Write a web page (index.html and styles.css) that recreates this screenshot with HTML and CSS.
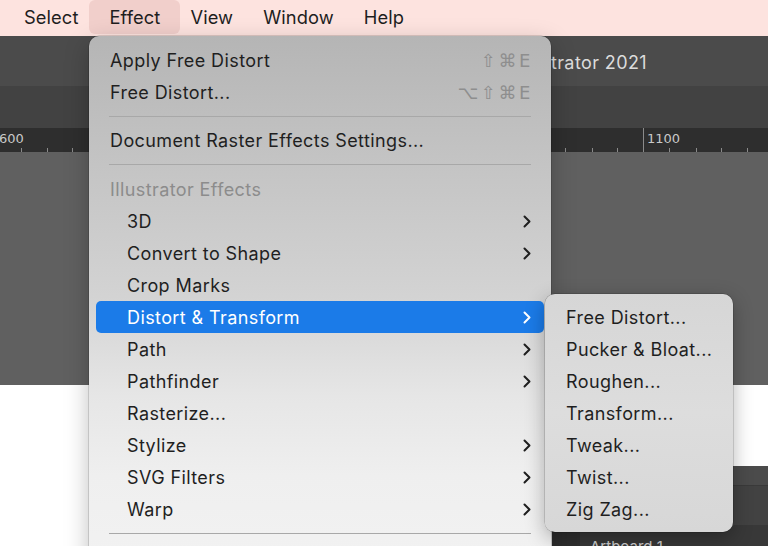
FILE: index.html
```html
<!DOCTYPE html>
<html>
<head>
<meta charset="utf-8">
<link rel="stylesheet" href="styles.css">
</head>
<body>
<div class="screen">
  <div class="menubar">
    <span class="mb-item">Select</span>
    <span class="mb-item active">Effect</span>
    <span class="mb-item">View</span>
    <span class="mb-item">Window</span>
    <span class="mb-item">Help</span>
  </div>
  <div class="app">
    <div class="titlebar"><span class="title">Adobe Illustrator 2021</span></div>
    <div class="toolband"></div>
    <div class="ruler">
      <svg class="ruler-ticks" width="768" height="24" viewBox="0 0 768 24">
        <g stroke="#8a8a8a" stroke-width="1">
          <line x1="21.5" y1="20" x2="21.5" y2="24"/>
          <line x1="47.5" y1="20" x2="47.5" y2="24"/>
          <line x1="72.5" y1="20" x2="72.5" y2="24"/>
          <line x1="565.5" y1="20" x2="565.5" y2="24"/>
          <line x1="592.5" y1="20" x2="592.5" y2="24"/>
          <line x1="617.5" y1="20" x2="617.5" y2="24"/>
          <line x1="643.5" y1="0" x2="643.5" y2="24"/>
          <line x1="669.5" y1="20" x2="669.5" y2="24"/>
          <line x1="696.5" y1="20" x2="696.5" y2="24"/>
          <line x1="721.5" y1="20" x2="721.5" y2="24"/>
          <line x1="747.5" y1="20" x2="747.5" y2="24"/>
        </g>
      </svg>
      <span class="rl rl-600">600</span>
      <span class="rl rl-1100">1100</span>
    </div>
    <div class="canvas"></div>
    <div class="lower">
      <div class="panel">
        <div class="panel-top"></div>
        <div class="panel-mid"></div>
        <div class="panel-bot"><span class="panel-side"></span><span class="panel-label">Artboard 1</span></div>
      </div>
    </div>
  </div>

  <div class="menu">
    <div class="row"><span class="lbl">Apply Free Distort</span><span class="sc">⇧⌘E</span></div>
    <div class="row"><span class="lbl">Free Distort...</span><span class="sc">⌥⇧⌘E</span></div>
    <div class="sep sep-a"></div>
    <div class="row"><span class="lbl">Document Raster Effects Settings...</span></div>
    <div class="sep"></div>
    <div class="row head"><span class="lbl">Illustrator Effects</span></div>
    <div class="row sub"><span class="lbl">3D</span><svg class="chev" width="8" height="13" viewBox="0 0 8 13"><polyline points="1.5,1.5 6.5,6.5 1.5,11.5"/></svg></div>
    <div class="row sub"><span class="lbl">Convert to Shape</span><svg class="chev" width="8" height="13" viewBox="0 0 8 13"><polyline points="1.5,1.5 6.5,6.5 1.5,11.5"/></svg></div>
    <div class="row sub"><span class="lbl">Crop Marks</span></div>
    <div class="row sub hl"><span class="lbl">Distort &amp; Transform</span><svg class="chev" width="8" height="13" viewBox="0 0 8 13"><polyline points="1.5,1.5 6.5,6.5 1.5,11.5"/></svg></div>
    <div class="row sub"><span class="lbl">Path</span><svg class="chev" width="8" height="13" viewBox="0 0 8 13"><polyline points="1.5,1.5 6.5,6.5 1.5,11.5"/></svg></div>
    <div class="row sub"><span class="lbl">Pathfinder</span><svg class="chev" width="8" height="13" viewBox="0 0 8 13"><polyline points="1.5,1.5 6.5,6.5 1.5,11.5"/></svg></div>
    <div class="row sub"><span class="lbl">Rasterize...</span></div>
    <div class="row sub"><span class="lbl">Stylize</span><svg class="chev" width="8" height="13" viewBox="0 0 8 13"><polyline points="1.5,1.5 6.5,6.5 1.5,11.5"/></svg></div>
    <div class="row sub"><span class="lbl">SVG Filters</span><svg class="chev" width="8" height="13" viewBox="0 0 8 13"><polyline points="1.5,1.5 6.5,6.5 1.5,11.5"/></svg></div>
    <div class="row sub"><span class="lbl">Warp</span><svg class="chev" width="8" height="13" viewBox="0 0 8 13"><polyline points="1.5,1.5 6.5,6.5 1.5,11.5"/></svg></div>
    <div class="sep"></div>
  </div>

  <div class="submenu">
    <div class="srow">Free Distort...</div>
    <div class="srow">Pucker &amp; Bloat...</div>
    <div class="srow">Roughen...</div>
    <div class="srow">Transform...</div>
    <div class="srow">Tweak...</div>
    <div class="srow">Twist...</div>
    <div class="srow">Zig Zag...</div>
  </div>
</div>
</body>
</html>
```

FILE: styles.css
```css
* { box-sizing: border-box; }
html, body { margin: 0; padding: 0; }
body {
  width: 768px;
  height: 546px;
  overflow: hidden;
  font-family: Inter, "Noto Sans", "DejaVu Sans", sans-serif;
  -webkit-font-smoothing: antialiased;
}
.screen {
  position: relative;
  width: 768px;
  height: 546px;
  overflow: hidden;
  background: #ffffff;
}

/* menu bar */
.menubar {
  height: 36px;
  background: #fde3df;
  display: flex;
  align-items: flex-start;
  padding-left: 9px;
  font-size: 18.3px;
  color: #1e1e1e;
}
.mb-item {
  height: 34px;
  line-height: 35px;
  padding: 0 15px;
  border-radius: 6px;
  letter-spacing: 0.1px;
}
.mb-item.active {
  background: #f1cfcb;
  padding: 0 20px 0 21px;
  margin: 0 -5px;
}

/* app behind */
.app { display: flex; flex-direction: column; }
.titlebar {
  height: 50px;
  background: #4b4b4b;
  padding-left: 452px;
  padding-top: 2px;
  display: flex;
  align-items: center;
}
.title {
  color: #dcdcdc;
  font-size: 18px;
  letter-spacing: 0.4px;
}
.toolband {
  height: 42px;
  background: #424242;
}
.ruler {
  position: relative;
  height: 24px;
  background: #2e2e2e;
}
.ruler-ticks { position: absolute; left: 0; top: 0; }
.rl {
  position: absolute;
  top: 3px;
  font-family: "DejaVu Sans", sans-serif;
  font-size: 13px;
  color: #c9c9c9;
}
.rl-600 { left: -1px; }
.rl-1100 { left: 647px; }
.canvas {
  height: 233px;
  background: #606060;
}
.lower {
  height: 161px;
  background: #ffffff;
  display: flex;
  justify-content: flex-end;
  padding-top: 81px;
}
.panel {
  width: 216px;
  display: flex;
  flex-direction: column;
}
.panel-top { height: 19px; background: #4b4b4b; }
.panel-mid { height: 40px; background: #424242; border-top: 1px solid #3a3a3a; }
.panel-bot {
  height: 21px;
  background: #383838;
  display: flex;
  align-items: flex-end;
  overflow: hidden;
}
.panel-side { width: 28px; height: 21px; background: #303030; }
.panel-label {
  color: #cfcfcf;
  font-size: 15px;
  margin-left: 10px;
  margin-bottom: -10px;
}

/* main menu */
.menu {
  position: absolute;
  left: 89px;
  top: 36px;
  width: 462px;
  height: 530px;
  border-radius: 10px 10px 0 0;
  background: linear-gradient(to bottom, #b5b5b5 0px, #c3c3c3 120px, #d3d3d3 260px, #e6e6e6 360px, #efefef 440px, #f2f2f2 100%);
  box-shadow: 0 0 0 0.5px rgba(0,0,0,0.25), 0 8px 24px rgba(0,0,0,0.25);
  padding: 8px 7px 0 7px;
  font-size: 18px;
  color: #1f1f1f;
}
.row {
  height: 32px;
  display: flex;
  align-items: center;
  padding: 0 14px 0 14px;
  border-radius: 5px;
}
.row .lbl { flex: 1; letter-spacing: 0.4px; }
.row.sub { padding-left: 31px; }
.row.head { color: #8c8c8c; }
.sc {
  color: #8e8e8e;
  font-size: 18px;
  letter-spacing: 2.5px;
  margin-right: -3px;
  font-family: "DejaVu Sans", sans-serif;
}
.chev { fill: none; stroke: #1f1f1f; stroke-width: 2; stroke-linecap: round; stroke-linejoin: round; margin-right: -1px; }
.row.hl {
  background: #1b7be8;
  color: #ffffff;
}
.row.hl .chev { stroke: #ffffff; }
.sep {
  height: 17px;
  display: flex;
  align-items: center;
  margin: 0 13px;
}
.sep.sep-a { height: 16px; }
.sep::before {
  content: "";
  flex: 1;
  height: 1px;
  background: #a8a8a8;
}

/* submenu */
.submenu {
  position: absolute;
  left: 545px;
  top: 294px;
  width: 188px;
  height: 238px;
  border-radius: 10px;
  background: linear-gradient(to bottom, #d6d6d6, #dddddd 50%, #d7d7d7);
  box-shadow: 0 0 0 0.5px rgba(0,0,0,0.25), 0 6px 20px rgba(0,0,0,0.3);
  padding: 8px 0 6px;
  font-size: 18px;
  color: #1f1f1f;
}
.srow {
  height: 32px;
  line-height: 32px;
  padding-left: 21px;
  letter-spacing: 0.4px;
}
```
